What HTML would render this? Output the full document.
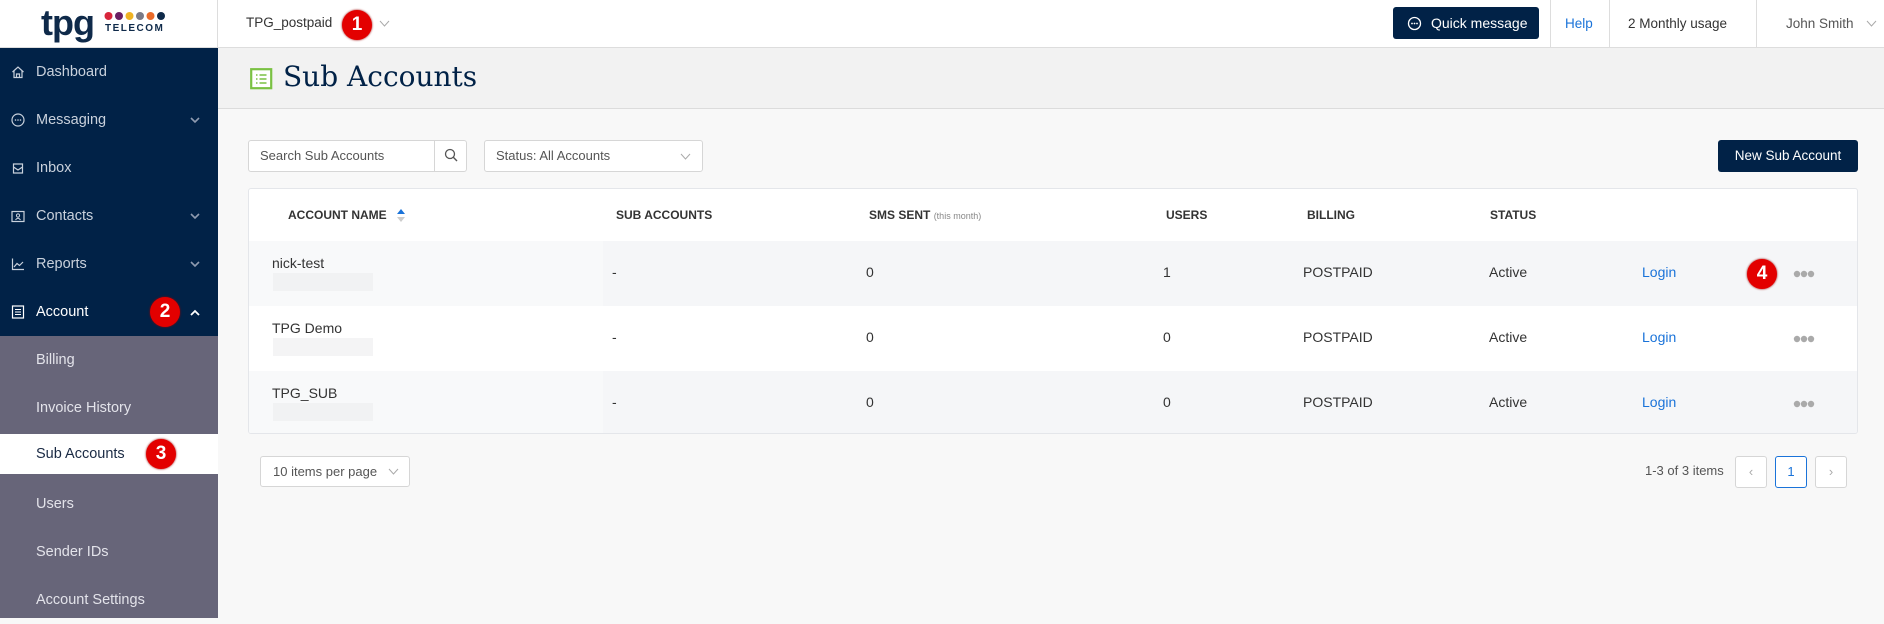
<!DOCTYPE html>
<html><head><meta charset="utf-8"><style>
*{box-sizing:border-box;margin:0;padding:0}
body{width:1884px;height:618px;overflow:hidden;font-family:"Liberation Sans",sans-serif;background:#f8f8f8;position:relative;color:#333}
.abs{position:absolute;white-space:nowrap}
#hdr{left:0;top:0;width:1884px;height:48px;background:#fff;border-bottom:1px solid #ddd}
#side{left:0;top:48px;width:218px;height:570px;background:#012247}
.nav{position:absolute;left:0;width:218px;height:48px;color:#c9d1dc;font-size:14.5px;line-height:48px;padding-left:36px}
.nav svg{position:absolute;left:11px;top:17px}
.nav svg.chev{left:auto;right:18px;top:21px}
.sub{position:absolute;left:0;width:218px;height:48px;color:#e3e3ea;font-size:14.5px;line-height:48px;padding-left:36px}
.badge{position:absolute;width:30px;height:30px;border-radius:50%;background:#e30000;color:#fff;font-weight:bold;font-size:19px;text-align:center;line-height:30px;box-shadow:0 0 2px #900}
.th{position:absolute;top:208px;font-size:12px;font-weight:bold;color:#333}
.cell{position:absolute;font-size:14px;color:#333}
.login{position:absolute;font-size:14px;color:#1a73d9}
.dots{position:absolute}
</style></head><body>
<div id="hdr" class="abs">
  <div class="abs" style="left:217px;top:0;width:1px;height:48px;background:#ddd"></div>
  <div class="abs" style="left:41px;top:4px;font-size:36px;font-weight:bold;color:#0f2a4a;letter-spacing:-1px;line-height:38px">tpg</div>
  <svg class="abs" style="left:104px;top:11px" width="62" height="10">
    <circle cx="4.5" cy="5" r="4" fill="#d8263b"/><circle cx="15" cy="5" r="4" fill="#6a1f63"/><circle cx="25.5" cy="5" r="4" fill="#f0b323"/><circle cx="36" cy="5" r="4" fill="#7a7a87"/><circle cx="46.5" cy="5" r="4" fill="#ea6b2a"/><circle cx="57" cy="5" r="4" fill="#0f2a4a"/>
  </svg>
  <div class="abs" style="left:105px;top:23px;font-size:10px;font-weight:bold;color:#0f2a4a;letter-spacing:1.5px">TELECOM</div>
  <div class="abs" style="left:246px;top:15px;font-size:13.5px;color:#333">TPG_postpaid</div>
  <div class="badge" style="left:342px;top:10px">1</div>
  <svg class="abs" style="left:379px;top:20px" width="11" height="7"><path d="M1 1 L5.5 6 L10 1" fill="none" stroke="#aaa" stroke-width="1"/></svg>
  <div class="abs" style="left:1393px;top:7px;width:146px;height:32px;background:#012247;border-radius:3px;color:#fff;font-size:14px;line-height:32px;padding-left:38px">Quick message</div>
  <svg class="abs" style="left:1407px;top:16px" width="15" height="15"><circle cx="7.5" cy="7.5" r="6" fill="none" stroke="#fff" stroke-width="1.3"/><circle cx="5" cy="7.5" r=".9" fill="#fff"/><circle cx="7.5" cy="7.5" r=".9" fill="#fff"/><circle cx="10" cy="7.5" r=".9" fill="#fff"/></svg>
  <div class="abs" style="left:1550px;top:0;width:1px;height:48px;background:#ddd"></div>
  <div class="abs" style="left:1565px;top:16px;font-size:13.5px;color:#1a73d9">Help</div>
  <div class="abs" style="left:1609px;top:0;width:1px;height:48px;background:#ddd"></div>
  <div class="abs" style="left:1628px;top:16px;font-size:13.5px;color:#333">2 Monthly usage</div>
  <div class="abs" style="left:1756px;top:0;width:1px;height:48px;background:#ddd"></div>
  <div class="abs" style="left:1786px;top:16px;font-size:13.5px;color:#555">John Smith</div>
  <svg class="abs" style="left:1866px;top:20px" width="11" height="7"><path d="M1 1 L5.5 6 L10 1" fill="none" stroke="#aaa" stroke-width="1"/></svg>
</div>
<div id="side" class="abs">
  <div class="nav" style="top:0">
    <svg width="14" height="14"><path d="M1.5 7 L7 2 L12.5 7 M3 6 V12.5 H11 V6 M5.5 12.5 V9 H8.5 V12.5" fill="none" stroke="#c9d1dc" stroke-width="1.2"/></svg>Dashboard</div>
  <div class="nav" style="top:48px"><svg width="14" height="14"><circle cx="7" cy="7" r="6" fill="none" stroke="#c9d1dc" stroke-width="1.2"/><circle cx="4.5" cy="7" r=".8" fill="#c9d1dc"/><circle cx="7" cy="7" r=".8" fill="#c9d1dc"/><circle cx="9.5" cy="7" r=".8" fill="#c9d1dc"/></svg>Messaging<svg class="chev" width="10" height="7"><path d="M1 1 L5 5 L9 1" fill="none" stroke="#8f9bb0" stroke-width="1.6"/></svg></div>
  <div class="nav" style="top:96px"><svg width="14" height="14"><path d="M2.5 3 H11.5 V12 H2.5 Z M2.5 6 L7 9 L11.5 6" fill="none" stroke="#c9d1dc" stroke-width="1.2"/></svg>Inbox</div>
  <div class="nav" style="top:144px"><svg width="14" height="14"><rect x="1" y="2.5" width="12" height="10" fill="none" stroke="#c9d1dc" stroke-width="1.2"/><circle cx="7" cy="6.5" r="1.6" fill="none" stroke="#c9d1dc"/><path d="M4.5 11 Q7 7.5 9.5 11" fill="none" stroke="#c9d1dc"/></svg>Contacts<svg class="chev" width="10" height="7"><path d="M1 1 L5 5 L9 1" fill="none" stroke="#8f9bb0" stroke-width="1.6"/></svg></div>
  <div class="nav" style="top:192px"><svg width="14" height="14"><path d="M1.5 1.5 V12.5 H13 M3 10 L6 6.5 L8.5 8.5 L12 5" fill="none" stroke="#c9d1dc" stroke-width="1.2"/></svg>Reports<svg class="chev" width="10" height="7"><path d="M1 1 L5 5 L9 1" fill="none" stroke="#8f9bb0" stroke-width="1.6"/></svg></div>
  <div class="nav" style="top:240px;color:#fff"><svg width="14" height="14"><rect x="1.5" y="1" width="11" height="12" fill="none" stroke="#fff" stroke-width="1.2"/><path d="M4 4.5 H10 M4 7 H10 M4 9.5 H10" stroke="#fff"/></svg>Account<svg class="chev" width="10" height="7"><path d="M1 6 L5 2 L9 6" fill="none" stroke="#fff" stroke-width="1.8"/></svg></div>
  <div class="badge" style="left:150px;top:249px">2</div>
  <div class="abs" style="left:0;top:288px;width:218px;height:282px;background:#676579"></div>
  <div class="sub" style="top:288px">Billing</div>
  <div class="sub" style="top:336px">Invoice History</div>
  <div class="sub" style="top:386px;height:40px;line-height:40px;background:#fff;color:#1a2a44">Sub Accounts</div>
  <div class="badge" style="left:146px;top:391px">3</div>
  <div class="sub" style="top:432px">Users</div>
  <div class="sub" style="top:480px">Sender IDs</div>
  <div class="sub" style="top:528px">Account Settings</div>
</div>
<div class="abs" style="left:218px;top:48px;width:1666px;height:61px;background:#f2f2f2;border-bottom:1px solid #dcdcdc"></div>
<svg class="abs" style="left:250px;top:68px" width="23" height="22"><rect x="1.2" y="1.2" width="20" height="19" fill="#fff" stroke="#7ac143" stroke-width="2.2"/><path d="M6 7h1.5M6 11h1.5M6 15h1.5M9.5 7h7M9.5 11h7M9.5 15h7" stroke="#7ac143" stroke-width="1.5"/></svg>
<div class="abs" style="left:283px;top:60px;font-family:'DejaVu Serif','Liberation Serif',serif;font-size:28px;color:#012247">Sub Accounts</div>
<div class="abs" style="left:248px;top:140px;width:219px;height:32px;background:#fff;border:1px solid #d6d6d6;border-radius:3px"></div>
<div class="abs" style="left:434px;top:140px;width:1px;height:32px;background:#d6d6d6"></div>
<div class="abs" style="left:260px;top:148px;font-size:13px;color:#555">Search Sub Accounts</div>
<svg class="abs" style="left:444px;top:148px" width="15" height="15"><circle cx="6" cy="6" r="4.5" fill="none" stroke="#555" stroke-width="1.3"/><path d="M9.3 9.3 L13 13" stroke="#555" stroke-width="1.4"/></svg>
<div class="abs" style="left:484px;top:140px;width:219px;height:32px;background:#fff;border:1px solid #d6d6d6;border-radius:3px"></div>
<div class="abs" style="left:496px;top:148px;font-size:13px;color:#555">Status: All Accounts</div>
<svg class="abs" style="left:680px;top:153px" width="11" height="7"><path d="M1 1 L5.5 6 L10 1" fill="none" stroke="#aaa" stroke-width="1"/></svg>
<div class="abs" style="left:1718px;top:140px;width:140px;height:32px;background:#012247;border-radius:3px;color:#fff;font-size:13.5px;line-height:32px;text-align:center">New Sub Account</div>
<div class="abs" style="left:248px;top:188px;width:1610px;height:246px;background:#fff;border:1px solid #e4e6ea;border-radius:3px;overflow:hidden">
  <div class="abs" style="left:0;top:52px;width:1610px;height:65px;background:#f5f6f8"></div>
  <div class="abs" style="left:0;top:52px;width:354px;height:65px;background:#f8f9fa"></div>
  <div class="abs" style="left:0;top:182px;width:1610px;height:64px;background:#f5f6f8"></div>
  <div class="abs" style="left:0;top:182px;width:354px;height:64px;background:#f8f9fa"></div>
  <div class="abs" style="left:24px;top:84px;width:100px;height:18px;background:#f1f2f3"></div>
  <div class="abs" style="left:24px;top:149px;width:100px;height:18px;background:#f4f4f5"></div>
  <div class="abs" style="left:24px;top:214px;width:100px;height:18px;background:#f1f2f3"></div>
</div>
<div class="th" style="left:288px">ACCOUNT NAME</div>
<svg class="abs" style="left:397px;top:209px" width="8" height="13"><path d="M0 5 L4 0 L8 5Z" fill="#1a73d9"/><path d="M0 8 L4 13 L8 8Z" fill="#ccc"/></svg>
<div class="th" style="left:616px">SUB ACCOUNTS</div>
<div class="th" style="left:869px">SMS SENT <span style="font-weight:normal;font-size:9px;color:#888">(this month)</span></div>
<div class="th" style="left:1166px">USERS</div>
<div class="th" style="left:1307px">BILLING</div>
<div class="th" style="left:1490px">STATUS</div>

<div class="cell" style="left:272px;top:255px">nick-test</div>
<div class="cell" style="left:272px;top:320px">TPG Demo</div>
<div class="cell" style="left:272px;top:385px">TPG_SUB</div>
<div class="cell" style="left:612px;top:264px">-</div><div class="cell" style="left:612px;top:329px">-</div><div class="cell" style="left:612px;top:394px">-</div>
<div class="cell" style="left:866px;top:264px">0</div><div class="cell" style="left:866px;top:329px">0</div><div class="cell" style="left:866px;top:394px">0</div>
<div class="cell" style="left:1163px;top:264px">1</div><div class="cell" style="left:1163px;top:329px">0</div><div class="cell" style="left:1163px;top:394px">0</div>
<div class="cell" style="left:1303px;top:264px">POSTPAID</div><div class="cell" style="left:1303px;top:329px">POSTPAID</div><div class="cell" style="left:1303px;top:394px">POSTPAID</div>
<div class="cell" style="left:1489px;top:264px">Active</div><div class="cell" style="left:1489px;top:329px">Active</div><div class="cell" style="left:1489px;top:394px">Active</div>
<div class="login" style="left:1642px;top:264px">Login</div><div class="login" style="left:1642px;top:329px">Login</div><div class="login" style="left:1642px;top:394px">Login</div>
<svg class="dots" style="left:1793px;top:270px" width="22" height="8"><circle cx="4" cy="4" r="3.2" fill="#aaa"/><circle cx="11" cy="4" r="3.2" fill="#aaa"/><circle cx="18" cy="4" r="3.2" fill="#aaa"/></svg>
<svg class="dots" style="left:1793px;top:335px" width="22" height="8"><circle cx="4" cy="4" r="3.2" fill="#aaa"/><circle cx="11" cy="4" r="3.2" fill="#aaa"/><circle cx="18" cy="4" r="3.2" fill="#aaa"/></svg>
<svg class="dots" style="left:1793px;top:400px" width="22" height="8"><circle cx="4" cy="4" r="3.2" fill="#aaa"/><circle cx="11" cy="4" r="3.2" fill="#aaa"/><circle cx="18" cy="4" r="3.2" fill="#aaa"/></svg>
<div class="badge" style="left:1747px;top:259px">4</div>

<div class="abs" style="left:260px;top:456px;width:150px;height:31px;background:#fff;border:1px solid #d6d6d6;border-radius:3px;font-size:13px;color:#555;line-height:29px;padding-left:12px">10 items per page</div>
<svg class="abs" style="left:388px;top:468px" width="11" height="7"><path d="M1 1 L5.5 6 L10 1" fill="none" stroke="#aaa" stroke-width="1"/></svg>
<div class="abs" style="left:1645px;top:463px;font-size:13px;color:#555">1-3 of 3 items</div>
<div class="abs" style="left:1735px;top:456px;width:32px;height:32px;border:1px solid #d6d6d6;border-radius:3px;background:#fff;color:#aaa;text-align:center;line-height:30px;font-size:13px">&lsaquo;</div>
<div class="abs" style="left:1775px;top:456px;width:32px;height:32px;border:1px solid #1a73d9;border-radius:3px;background:#fff;color:#1a73d9;text-align:center;line-height:30px;font-size:13px">1</div>
<div class="abs" style="left:1815px;top:456px;width:32px;height:32px;border:1px solid #d6d6d6;border-radius:3px;background:#fff;color:#aaa;text-align:center;line-height:30px;font-size:13px">&rsaquo;</div>
</body></html>
